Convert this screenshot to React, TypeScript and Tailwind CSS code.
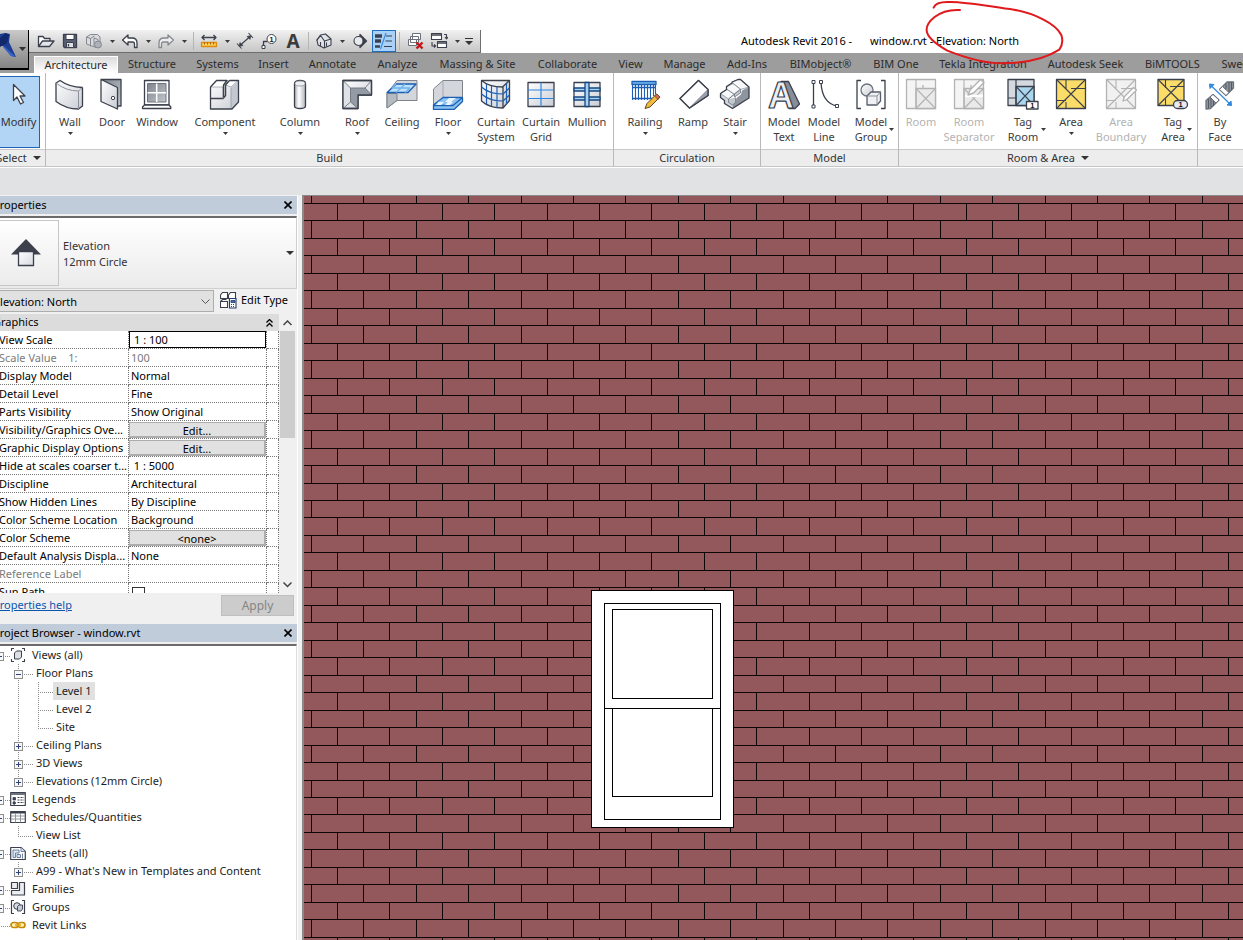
import type { ReactNode } from "react";
import clsx from "clsx";

const INK = "#3b404c";
const BLUE = "#1d5fb4";

/* ---------- shared drawing helpers ---------- */

function Defs() {
  return (
    <svg className="absolute h-0 w-0" aria-hidden="true">
      <defs>
        <linearGradient id="metal" x1="0" y1="0" x2="1" y2="1">
          <stop offset="0" stopColor="#ffffff" />
          <stop offset="1" stopColor="#c9cdd4" />
        </linearGradient>
        <linearGradient id="dark" x1="0" y1="0" x2="1" y2="1">
          <stop offset="0" stopColor="#7e848e" />
          <stop offset="1" stopColor="#c3c7cd" />
        </linearGradient>
        <linearGradient id="tube" x1="0" y1="0" x2="1" y2="0">
          <stop offset="0" stopColor="#a9adb5" />
          <stop offset="0.4" stopColor="#ffffff" />
          <stop offset="1" stopColor="#b0b4bc" />
        </linearGradient>
      </defs>
    </svg>
  );
}

function Icon({ size = 32, children, faded }: { size?: number; children: ReactNode; faded?: boolean }) {
  return (
    <svg
      width={size}
      height={size}
      viewBox={`0 0 ${size} ${size}`}
      fill="none"
      stroke={INK}
      strokeWidth="1.3"
      strokeLinejoin="round"
      aria-hidden="true"
      className={clsx("shrink-0", faded && "opacity-40 grayscale")}
    >
      {children}
    </svg>
  );
}

function Down({ small }: { small?: boolean }) {
  return small ? (
    <svg width="5" height="3" viewBox="0 0 5 3" aria-hidden="true">
      <path d="M0 0h5L2.500 3z" fill="#3a3a3a" />
    </svg>
  ) : (
    <svg width="8" height="4" viewBox="0 0 8 4" aria-hidden="true">
      <path d="M0 0h8L4 4z" fill="#333" />
    </svg>
  );
}

/* ---------- ribbon icons ---------- */

const CursorIcon = (
  <Icon>
    <path d="M10.500 6.500v16l3.500-3.500 3.500 7 3-1.500-3.500-6.500h5z" fill="#fff" />
  </Icon>
);
const WallIcon = (
  <Icon>
    <path d="M2 5 6 2.500Q15 9 28.500 9.500V28l-4 3Q12 31 2 23.500z" fill="url(#metal)" />
    <path d="M2 5Q12 13 24.500 13V31M24.500 13l4-3.500" stroke="#8b909a" strokeWidth="1" />
  </Icon>
);
const DoorIcon = (
  <Icon>
    <path d="M5 1.500h20V28h-4" fill="url(#dark)" />
    <path d="M5 1.500 21.500 9.500V31L5 23.500z" fill="url(#metal)" />
    <circle cx="17" cy="20" r="1.700" fill="#fff" strokeWidth="1" />
  </Icon>
);
const WindowIcon = (
  <Icon>
    <path d="M3.500 2.500h24.500V27H3.500z" fill="#fff" />
    <path d="M6.500 5.500h18.500V24H6.500z" fill="url(#dark)" stroke="#6d737e" strokeWidth="1" />
    <path d="M15.700 5.500V24M6.500 14.800H25" stroke="#fff" strokeWidth="1.500" />
    <path d="M1.500 30.500V29l2-2H28l1.800 2v1.500z" fill="#fff" />
  </Icon>
);
const ComponentIcon = (
  <Icon>
    <path d="M1.500 9 7.500 2.500h22V24L23 31H1.500z" fill="url(#metal)" stroke="none" />
    <path d="M22 10 29.500 3V24L23 31h-1z" fill="#c3c7cf" stroke="none" />
    <path d="M1.500 9 7.500 2.500h10.500L14 9zM22 9l7-6.500h-8.500L16.500 7z" fill="#fff" stroke="#9aa0aa" strokeWidth="0.800" />
    <path d="M16.500 7v10.500L14 20.500H1.500" strokeWidth="1.500" />
    <path d="M14 9v11.500M22 9.500V31" stroke="#9aa0aa" strokeWidth="0.900" />
    <path d="M1.500 9 7.500 2.500h10.500L14.500 7v12.500M20.500 2.500h9V24L23 31H1.500V9M16.500 7l4-4.500" />
  </Icon>
);
const ColumnIcon = (
  <Icon>
    <path d="M10.500 5.500Q10.500 2.500 16 2.500T21.500 5.500V28Q21.500 30.500 16 30.500T10.500 28z" fill="url(#tube)" />
    <ellipse cx="16" cy="5.500" rx="5" ry="2.500" fill="#eef0f2" stroke="#8b909a" strokeWidth="0.800" />
  </Icon>
);
const RoofIcon = (
  <Icon>
    <path d="M2 2.500h28.500V17H17v13.500H2z" fill="url(#metal)" />
    <path d="M2 2.500 9.500 10V24L2 30.500z" fill="#dfe2e6" stroke="none" />
    <path d="M9.500 10H24l6.500 7H17v13.500L9.500 24z" fill="#959ba5" stroke="none" />
    <path d="M2 2.500 9.500 10H24l6.500-7.500M24 10l6.500 7M9.500 10V24L17 30.500M9.500 24 2 30.500" stroke="#6d737e" strokeWidth="0.900" />
    <path d="M2 2.500h28.500V17H17v13.500H2z" />
  </Icon>
);
const CeilingIcon = (
  <Icon>
    <path d="M1 15.500 11 2.500h20v20H11L1 30z" fill="#d3d6da" stroke="#7d828b" strokeWidth="1" />
    <path d="M11 15.500v7L1 30V15.500z" fill="#b5bac1" stroke="#7d828b" strokeWidth="1" />
    <path d="M1 14.500 10.500 6H30l-8 8.500z" fill="#bfe0fb" stroke={BLUE} />
    <path d="m10 6-4 4h9l-5 4.500M19 6l-4 4h9M19 14.500l5-4.500" stroke="#6fb4ea" />
  </Icon>
);
const FloorIcon = (
  <Icon>
    <path d="M1.500 11 11 2.500h19.500V20H13L1.500 27z" fill="#d3d6da" stroke="#7d828b" strokeWidth="1" />
    <path d="M11 2.500V20" stroke="#a5aab2" strokeWidth="1" />
    <path d="M1.500 27 11 19.500h19.500v4L22 31.500H1.500z" fill="#8cc3f2" stroke={BLUE} />
    <path d="M1.500 27.500H21l9.500-8" stroke={BLUE} />
    <path d="m9 21-3 3h6l-3 3H4zM17 20l-4 4h6l5-4zM16 24l-3 3h5l3-3z" fill="#e8f5ff" stroke="none" />
  </Icon>
);
const CurtainSystemIcon = (
  <Icon>
    <path d="M1.500 2.500h28v20L23 30Q9 30 1.500 23z" fill="url(#metal)" />
    <path d="M1.500 2.500Q9 9 22.500 9l7-6.500M23 9v21" />
    <path d="M1.500 9Q9 16 23 16l6.500-6M1.500 16Q9 23 23 23l6.500-6M6.500 6v20.500M11.500 8v20.500M17 8.500V30M26.500 5.500V26" stroke={BLUE} strokeWidth="1.200" />
  </Icon>
);
const CurtainGridIcon = (
  <Icon>
    <path d="M3 4.500h26v24H3z" fill="url(#metal)" />
    <path d="M16 4.500v24M3 12h26M3 20.500h26" stroke="#2f86e0" strokeWidth="1.200" />
  </Icon>
);
const MullionIcon = (
  <Icon>
    <path d="M3 4.500h26v24H3z" fill="url(#metal)" />
    <path d="M3 10h26v3H3zM3 19h26v3H3z" fill="#a6d4f9" stroke="#17467f" />
    <path d="M14 4.500h4v24h-4z" fill="#a6d4f9" stroke="#17467f" />
  </Icon>
);
const RailingIcon = (
  <Icon>
    <path d="M3 3.500h24v3H3zM3 9.500h24M3 20.500h22" fill="#73b8f0" stroke={BLUE} />
    <path d="M3.500 6.500V22M6.500 6.500V22M9.500 6.500V22M12.500 6.500V22M15.500 6.500V22M18.500 6.500V22M21.500 6.500V20M24.500 6.500V18M26.500 6.500V16" stroke={BLUE} strokeWidth="1.100" />
    <path d="M16 30.500 18 25.500 27.500 16l3.500 3-10 10z" fill="#f5b93b" stroke="#5b4a2b" strokeWidth="1" />
    <path d="m25.500 18 3.500 3.500 2-2.500-3.500-3z" fill="#d86a52" stroke="#5b4a2b" strokeWidth="0.800" />
  </Icon>
);
const RampIcon = (
  <Icon>
    <path d="M3 20.500 21.500 2.500l9.500 9v6L12.500 30z" fill="#b0b5bf" />
    <path d="M3 20.500 21.500 2.500l9.500 9L12.500 30z" fill="#fff" stroke="none" />
    <path d="M31 11.500v6L12.500 30z" fill="#9ba1ac" stroke="none" />
    <path d="M12.500 30 31 11.500" stroke="#8b909a" strokeWidth="1" />
    <path d="M3 20.500 21.500 2.500l9.500 9v6L12.500 30z" />
  </Icon>
);
const StairIcon = (
  <Icon>
    <path d="M13.500 30.500 30 20V9l-7 3.500-1 4-4.500 3.500-1 4-3 1.500z" fill="#8f959f" stroke="none" />
    <path d="M1.500 15.500v4l4 3v3l8 5V26l-4-3v-2z" fill="#d3d7dd" stroke="none" />
    <path d="m1.500 15.500 6.500-4 7 4.500-5.500 5zM7.500 11V9l6.500-3.500 7.500 5.500-6.500 5zM13 4.500 19 1.500h2.500L30 9l-8.500 2.500z" fill="#f7f8fa" stroke="#8b909a" strokeWidth="0.800" />
    <path d="M9.500 21 15.500 16.500M21.500 11.500 15.500 16v3L21.500 15zM9.500 21v3.500l4 2.500 3-2.500v-5" fill="#c3c7ce" stroke="#6d737e" strokeWidth="0.800" />
    <path d="M13.500 30.500 5.500 25.500V22.500l-4-3v-4l6-4V8.500l5.500-3.500V4l6-2.500h2.500L30 9v11z" />
  </Icon>
);
const ModelTextIcon = (
  <Icon>
    <path d="M13 3.500h7.500L31.500 26l-4.500 4.500h-6z" fill="#888e98" />
    <text x="0" y="30" fill="#eceef1" fontFamily="Liberation Sans" fontWeight="bold" fontSize="36" strokeWidth="1.200">
      A
    </text>
  </Icon>
);
const ModelLineIcon = (
  <Icon>
    <path d="M5.500 4.500v24M13 4.500Q14 25 29 28" />
    <path d="M4 2.500h3v3H4zM4 27h3v3H4zM11.500 2.500h3v3h-3zM27.500 26.500h3v3h-3z" fill="#fff" strokeWidth="1" />
  </Icon>
);
const ModelGroupIcon = (
  <Icon>
    <path d="M6 2.500H2v28h4M26 2.500h4v28h-4" />
    <circle cx="12" cy="12" r="6" fill="url(#metal)" stroke="#6d737e" />
    <path d="m12 18 4-4h9.500v9L22 27H12z" fill="#eef0f3" stroke="#565c68" />
    <path d="M12 18h10v9M22 18l3.500-4" stroke="#8b909a" strokeWidth="1" />
  </Icon>
);

function PlanBase({ fill, room }: { fill: string; room: string }) {
  return (
    <>
      <path d="M1.500 1.500H30.500V30.500H1.500z" fill={fill} />
      <path d="M11 10.500h19.500v20H11z" fill={room} />
      <path d="M11 1.500v29M11 10.500h19.500M11 10.500l19.500 20M30.500 10.500 11 30.500" strokeWidth="1.100" />
      <path d="M18 10.500V7" />
    </>
  );
}
const RoomIcon = (
  <Icon faded>
    <PlanBase fill="#e4e6e9" room="#c9ccd2" />
  </Icon>
);
const RoomSeparatorIcon = (
  <Icon faded>
    <PlanBase fill="#e4e6e9" room="#c9ccd2" />
    <path d="M12 18h18" stroke="#fff" strokeWidth="2.500" />
    <path d="m15 17 2-5L27.500 1.500l3.500 3L20.500 15z" fill="#fff" strokeWidth="1.400" />
  </Icon>
);
const TagRoomIcon = (
  <Icon>
    <path d="M1 1.500h26v26H1z" fill="#d4d9e0" />
    <path d="M9 8.500h18v19H9z" fill="#a9d5ee" />
    <path d="M9 1.500v26M9 8.500h18M9 8.500l18 19M27 8.500l-18 19M1 20h8" strokeWidth="1.200" />
    <path d="M19.500 23.500H31V31H19.500z" fill="#fff" />
    <text x="23.300" y="30" fontSize="7.500" fontWeight="bold" fill="#111" stroke="none" fontFamily="Liberation Sans">1</text>
  </Icon>
);
const AreaLines = <path d="M1.500 1.500l29 29M30.500 1.500l-29 29M11 1.500V11M11 24v6.500M16 10.500h14.500M1.500 22.500H11" strokeWidth="1.100" />;
const AreaIcon = (
  <Icon>
    <path d="M1.500 1.500h29v29h-29z" fill="#fbdc68" />
    {AreaLines}
  </Icon>
);
const AreaBoundaryIcon = (
  <Icon faded>
    <path d="M1.500 1.500h29v29h-29z" fill="#dcdee2" />
    {AreaLines}
    <path d="m18 23 1.500-4.500 9-9 3 2.500-9.500 9.500z" fill="#fff" />
  </Icon>
);
const TagAreaIcon = (
  <Icon>
    <path d="M1 1.500h26v26H1z" fill="#fbdc68" />
    <path d="m1 1.500 26 26M27 1.500l-26 26M8.500 1.500V10M13 8.500h14M8.500 21v6.500" strokeWidth="1.100" />
    <rect x="16.500" y="22.500" width="14" height="8" rx="4" fill="#e8eaf3" />
    <text x="21.400" y="29.300" fontSize="7.500" fontWeight="bold" fill="#111" stroke="none" fontFamily="Liberation Sans">1</text>
  </Icon>
);
const ByFaceIcon = (
  <Icon>
    <path d="M15.500 11.500 23 4h6.500v6l-7.500 7.500zM2 31v-8.500l7-6 6 5.500L6.500 30.500z" fill="#8f949d" stroke="#6b717c" />
    <path d="m15.500 11.500 3-3 6.500 6-3 3zM6 19l3-2.500 6 5.500-3 3z" fill="#fff" stroke="#6b717c" strokeWidth="1" />
    <path d="M22 6v5M25 4v10M27.500 4v8M4.500 21v9M7 20v9M9.500 23v5" stroke="#4d525c" strokeWidth="0.900" />
    <path d="M7 7.500 26 26" stroke="#3287e0" strokeWidth="1.200" />
    <path d="m5.500 6 4.500.500L6 10.500zM27.500 27.500l-4.500-.5 4-4z" fill="#3287e0" stroke="#3287e0" strokeWidth="1" />
  </Icon>
);

/* ---------- quick access toolbar ---------- */

const OpenIcon = (
  <Icon size={18}>
    <path d="M1.500 14.500V4.500h4.500l1.500 2h5.500v2.500" fill="#fff" />
    <path d="m1.500 14.500 4-5.500h11.500l-4.500 5.500z" fill="#e4e6ea" />
  </Icon>
);
const SaveIcon = (
  <Icon size={18}>
    <path d="M2.500 2.500h13v13h-12l-1-1z" fill="#596072" />
    <path d="M5 2.500h8v5H5z" fill="#fff" strokeWidth="1" />
    <path d="M5.500 10.500h7v5h-7z" fill="#dfe2e7" strokeWidth="1" />
    <path d="M7.500 12v2.500" />
  </Icon>
);
const SyncIcon = (
  <Icon size={18}>
    <g stroke="#85888f" strokeWidth="1">
      <path d="m1.500 5 4-2.500h7L15 5v7l-4 3.500L1.500 12z" fill="#d9dbdf" />
      <path d="m1.500 5 4 1.500v8M5.500 6.500l4-2.500M9 6l4 1.500V12M9 6v8" />
      <circle cx="13" cy="12.500" r="3.500" fill="#aeb1b7" />
    </g>
  </Icon>
);
const UndoIcon = (
  <Icon size={18}>
    <path d="M7 3 1.500 8 7 13v-3h4.500q2 0 2 2v3.500h2.500V11q0-5-5-5H7z" fill="#fff" />
  </Icon>
);
const RedoIcon = (
  <Icon size={18}>
    <path d="m11 3 5.500 5-5.500 5v-3H6.500q-2 0-2 2v3.500H2V11q0-5 5-5h4z" fill="#eee" stroke="#85888f" />
  </Icon>
);
const MeasureIcon = (
  <Icon size={18}>
    <path d="M2 5.500h14M4.500 3 2 5.500 4.500 8M13.500 3 16 5.500 13.500 8" />
    <path d="M1.500 10.500h15v4h-15z" fill="#ffd25a" stroke="#dc8b10" />
    <path d="M4.500 10.500v2M7.500 10.500v2M10.500 10.500v2M13.500 10.500v2" stroke="#a36205" strokeWidth="1" />
  </Icon>
);
const DimensionIcon = (
  <Icon size={18}>
    <path d="M4 13.500 14 4.500M1 11.500l4.500 5M12.500 1l4.500 5" strokeWidth="1.100" />
    <path d="m3 14.500 1-4 3 3zM15 3.500l-4 1 3 3z" fill={INK} strokeWidth="0.600" />
  </Icon>
);
const TagIcon = (
  <Icon size={18}>
    <path d="M3.500 14V9.500h4" />
    <circle cx="11.500" cy="7" r="4.500" fill="#fff" strokeWidth="1" />
    <path d="M2 13.500h3v3H2z" fill="#fff" strokeWidth="1" />
    <text x="9.300" y="9.800" fontSize="8" fontWeight="bold" fill="#222" stroke="none" fontFamily="Liberation Sans">1</text>
  </Icon>
);
const HouseIcon = (
  <Icon size={18}>
    <path d="m2 8 3.500-5 5-1L16 7v6l-7 3-6-3z" fill="#dfe2e6" strokeWidth="1.100" />
    <path d="m1.500 8.500 4-5L9.500 9v7M9.500 9 16 7M11.500 10.500v4M5.500 10v4" strokeWidth="1.100" />
  </Icon>
);
const SectionIcon = (
  <Icon size={18}>
    <path d="M9 2.500 15.500 9 9 15.500z" fill={INK} />
    <circle cx="7.500" cy="9" r="4.500" fill="#e8eaed" strokeWidth="1.100" />
  </Icon>
);
const ThinLinesIcon = (
  <Icon size={18}>
    <path d="M0 4h7M0 9h6" strokeWidth="3.500" />
    <path d="M0 14.500h5" strokeWidth="2.500" />
    <path d="M11 4h6M10.500 9H17M9 14.500h8" strokeWidth="1.200" />
    <path d="M11 1 5.500 17" stroke="#3a8de6" strokeWidth="1.200" />
  </Icon>
);
const CloseHiddenIcon = (
  <Icon size={18}>
    <g strokeWidth="1" stroke="#6b707a">
      <path d="M6.500 1.500h8v6h-8zM4.500 4.500h8v6h-8zM2.500 7.500h8v6h-8z" fill="#fff" />
    </g>
    <path d="m10.500 10.500 6 6M16.500 10.500l-6 6" stroke="#c4161c" strokeWidth="2.400" />
  </Icon>
);
const SwitchIcon = (
  <Icon size={18}>
    <path d="M1.500 1.500h10v6h-10zM7.500 9.500h9v6h-9z" fill="#fff" strokeWidth="1.100" />
    <path d="M1.500 3h10M7.500 11h9" strokeWidth="1.600" />
    <path d="M14 2.500h2.500V6M15 5l1.500 2L18 5M2 10v4h3.500M4 12.500 5.500 14 4 15.500" strokeWidth="1.100" />
  </Icon>
);

function QuickButton({ label, active, children }: { label: string; active?: boolean; children: ReactNode }) {
  return (
    <button
      type="button"
      aria-label={label}
      className={clsx(
        "flex h-[22px] w-6 shrink-0 items-center justify-center",
        active && "border border-[#1f6fc0] bg-[#a9d1f7]",
      )}
    >
      {children}
    </button>
  );
}

function QuickMenu({ label }: { label: string }) {
  return (
    <button type="button" aria-label={label} className="flex h-[22px] w-3 shrink-0 items-center justify-center">
      <Down small />
    </button>
  );
}

const QuickDivider = () => <span className="mx-[3px] h-[18px] w-px shrink-0 bg-[#b5b5b5]" />;

function QuickAccess() {
  return (
    <div className="flex h-[23px] shrink-0 items-center border-r border-b border-[#6e6e6e] bg-linear-to-b from-[#f1f1f1] to-[#c6c6c6] px-[5px]">
      <QuickButton label="Open">{OpenIcon}</QuickButton>
      <QuickButton label="Save">{SaveIcon}</QuickButton>
      <QuickButton label="Synchronize">{SyncIcon}</QuickButton>
      <QuickMenu label="Synchronize options" />
      <QuickButton label="Undo">{UndoIcon}</QuickButton>
      <QuickMenu label="Undo history" />
      <QuickButton label="Redo">{RedoIcon}</QuickButton>
      <QuickMenu label="Redo history" />
      <QuickDivider />
      <QuickButton label="Measure">{MeasureIcon}</QuickButton>
      <QuickMenu label="Measure options" />
      <QuickButton label="Aligned dimension">{DimensionIcon}</QuickButton>
      <QuickButton label="Tag by category">{TagIcon}</QuickButton>
      <QuickButton label="Text">
        <span className="text-[19px] leading-none font-bold text-[#3b3b3b]">A</span>
      </QuickButton>
      <QuickDivider />
      <QuickButton label="Default 3D view">{HouseIcon}</QuickButton>
      <QuickMenu label="3D view options" />
      <QuickButton label="Section">{SectionIcon}</QuickButton>
      <QuickButton label="Thin lines" active>
        {ThinLinesIcon}
      </QuickButton>
      <QuickDivider />
      <QuickButton label="Close hidden windows">{CloseHiddenIcon}</QuickButton>
      <QuickButton label="Switch windows">{SwitchIcon}</QuickButton>
      <QuickMenu label="Window list" />
      <button type="button" aria-label="Customize toolbar" className="flex h-[22px] w-3 flex-col items-center justify-center gap-[2px]">
        <span className="h-px w-2 bg-[#333]" />
        <Down />
      </button>
    </div>
  );
}

/* ---------- ribbon ---------- */

const TABS = [
  { label: "Architecture", width: "w-[84px]" },
  { label: "Structure", width: "w-[68px]" },
  { label: "Systems", width: "w-[63px]" },
  { label: "Insert", width: "w-[49px]" },
  { label: "Annotate", width: "w-[69px]" },
  { label: "Analyze", width: "w-[61px]" },
  { label: "Massing & Site", width: "w-[99px]" },
  { label: "Collaborate", width: "w-[81px]" },
  { label: "View", width: "w-[45px]" },
  { label: "Manage", width: "w-[63px]" },
  { label: "Add-Ins", width: "w-[62px]" },
  { label: "BIMobject®", width: "w-[85px]" },
  { label: "BIM One", width: "w-[66px]" },
  { label: "Tekla Integration", width: "w-[108px]" },
  { label: "Autodesk Seek", width: "w-[97px]" },
  { label: "BiMTOOLS", width: "w-[77px]" },
  { label: "Sweet", width: "w-[52px]" },
];

type Tool = { lines: string[]; icon: ReactNode; width: string; menu?: boolean; off?: boolean };
type Panel = { title: string; pad: string; tools: Tool[]; menu?: boolean };

const PANELS: Panel[] = [
  {
    title: "Build",
    pad: "pr-1 pl-[3px]",
    tools: [
      { lines: ["Wall"], icon: WallIcon, width: "w-[42px]", menu: true },
      { lines: ["Door"], icon: DoorIcon, width: "w-[42px]" },
      { lines: ["Window"], icon: WindowIcon, width: "w-[48px]" },
      { lines: ["Component"], icon: ComponentIcon, width: "w-[88px]", menu: true },
      { lines: ["Column"], icon: ColumnIcon, width: "w-[62px]", menu: true },
      { lines: ["Roof"], icon: RoofIcon, width: "w-[52px]", menu: true },
      { lines: ["Ceiling"], icon: CeilingIcon, width: "w-[38px]" },
      { lines: ["Floor"], icon: FloorIcon, width: "w-[54px]", menu: true },
      { lines: ["Curtain", "System"], icon: CurtainSystemIcon, width: "w-[42px]" },
      { lines: ["Curtain", "Grid"], icon: CurtainGridIcon, width: "w-[48px]" },
      { lines: ["Mullion"], icon: MullionIcon, width: "w-[44px]" },
    ],
  },
  {
    title: "Circulation",
    pad: "px-[7px]",
    tools: [
      { lines: ["Railing"], icon: RailingIcon, width: "w-[48px]", menu: true },
      { lines: ["Ramp"], icon: RampIcon, width: "w-[48px]" },
      { lines: ["Stair"], icon: StairIcon, width: "w-[36px]", menu: true },
    ],
  },
  {
    title: "Model",
    pad: "pl-[3px]",
    tools: [
      { lines: ["Model", "Text"], icon: ModelTextIcon, width: "w-[40px]" },
      { lines: ["Model", "Line"], icon: ModelLineIcon, width: "w-[40px]" },
      { lines: ["Model", "Group"], icon: ModelGroupIcon, width: "w-[54px]", menu: true },
    ],
  },
  {
    title: "Room & Area",
    pad: "px-px",
    menu: true,
    tools: [
      { lines: ["Room"], icon: RoomIcon, width: "w-[42px]", off: true },
      { lines: ["Room", "Separator"], icon: RoomSeparatorIcon, width: "w-[54px]", off: true },
      { lines: ["Tag", "Room"], icon: TagRoomIcon, width: "w-[54px]", menu: true },
      { lines: ["Area"], icon: AreaIcon, width: "w-[42px]", menu: true },
      { lines: ["Area", "Boundary"], icon: AreaBoundaryIcon, width: "w-[58px]", off: true },
      { lines: ["Tag", "Area"], icon: TagAreaIcon, width: "w-[46px]", menu: true },
    ],
  },
];

function ToolButton({ tool }: { tool: Tool }) {
  const twoLines = tool.lines.length > 1;
  return (
    <button
      type="button"
      disabled={tool.off}
      className={clsx(
        "relative flex shrink-0 flex-col items-center pt-[5px] whitespace-nowrap",
        tool.width,
        tool.off ? "text-[#b3b3b3]" : "text-[#3c3c3c]",
      )}
    >
      {tool.icon}
      <span className="mt-1 flex flex-col items-center leading-[15px]">
        {tool.lines.map((line) => (
          <span key={line}>{line}</span>
        ))}
      </span>
      {tool.menu && (
        <span className={twoLines ? "absolute right-1 bottom-[18px]" : "mt-[3px]"}>
          <Down small />
        </span>
      )}
    </button>
  );
}

function PanelTitle({ children }: { children?: ReactNode }) {
  return (
    <div className="flex h-[17px] items-center justify-center gap-[6px] border-t border-[#c9c9c9] bg-[#ededee] whitespace-nowrap">
      {children}
    </div>
  );
}

function Ribbon() {
  return (
    <div className="flex h-[94px] shrink-0 border-b border-[#c4c6c8] bg-white text-[#333]">
      <section className="flex w-[54px] shrink-0 flex-col border-r border-[#b9b9b9]">
        <div className="flex h-[76px] pt-[3px] pb-px pl-[5px]">
          <button
            type="button"
            className="flex w-[43px] flex-col items-center border border-[#1f63b5] bg-[#b3d5f5] pt-px"
          >
            {CursorIcon}
            <span className="mt-1 leading-[15px]">Modify</span>
          </button>
        </div>
        <PanelTitle>
          Select <Down />
        </PanelTitle>
      </section>
      {PANELS.map((panel) => (
        <section key={panel.title} className="flex shrink-0 flex-col border-r border-[#b9b9b9]">
          <div className={clsx("flex h-[76px]", panel.pad)}>
            {panel.tools.map((tool) => (
              <ToolButton key={tool.lines.join(" ")} tool={tool} />
            ))}
          </div>
          <PanelTitle>
            {panel.title}
            {panel.menu && <Down />}
          </PanelTitle>
        </section>
      ))}
      <section className="flex flex-1 flex-col">
        <div className="flex h-[76px]">
          <ToolButton tool={{ lines: ["By", "Face"], icon: ByFaceIcon, width: "w-[44px]" }} />
        </div>
        <PanelTitle />
      </section>
    </div>
  );
}

function Header() {
  return (
    <header className="flex shrink-0 pt-[30px]">
      <div className="flex w-[37px] shrink-0 flex-col bg-[#9d9d9d]">
        <button
          type="button"
          aria-label="Application menu"
          className="flex h-10 items-start justify-end border-r border-b-2 border-black bg-linear-to-b from-[#c9c9c9] to-[#848484] pr-[2px]"
        >
          <svg width="26" height="38" viewBox="0 0 26 38" aria-hidden="true">
            <path d="M-4 5 5 3l5 1-1 8 7 15-5-1-8-10-7-2z" fill="#1c3f94" />
            <path d="m0 8 6-5 3 2-2 8-7 4z" fill="#12296b" />
            <path d="m4 16 12 11-5-1-8-9z" fill="#3764c4" />
            <path d="M19 17h7l-3.500 4z" fill="#333" />
          </svg>
        </button>
      </div>
      <div className="flex min-w-0 flex-1 flex-col">
        <div className="flex">
          <QuickAccess />
          <h1 className="ml-[260px] flex items-center gap-[18px] whitespace-nowrap text-black">
            <span>Autodesk Revit 2016 -</span>
            <span className="relative">
              window.rvt - Elevation: North
              <svg
                width="140"
                height="66"
                viewBox="0 0 420 198"
                className="pointer-events-none absolute -top-[33px] left-[54px] z-10"
                fill="none"
                stroke="#e0191c"
                strokeWidth="6"
                strokeLinecap="round"
                aria-hidden="true"
              >
                <path d="M29 23C34 10 50 5 75 6C120 4 200 20 270 29C330 40 395 70 412 105Q420 130 406 149C370 172 310 190 235 190C180 190 120 172 70 152C40 135 10 115 8 92C6 70 40 26 108 30" />
              </svg>
            </span>
          </h1>
        </div>
        <nav className="flex h-5 overflow-hidden bg-[#9d9d9d] pl-[5px] whitespace-nowrap text-[#2b2b2b]">
          {TABS.map((tab, i) => (
            <button
              key={tab.label}
              type="button"
              className={clsx(
                "shrink-0",
                tab.width,
                i === 0
                  ? "mt-[3px] border border-b-0 border-white bg-linear-to-b from-[#dcdcdc] to-white leading-[14px]"
                  : "leading-[22px]",
              )}
            >
              {tab.label}
            </button>
          ))}
        </nav>
      </div>
    </header>
  );
}

/* ---------- properties palette ---------- */

function PaletteTitle({ children }: { children: ReactNode }) {
  return (
    <div className="flex h-[18px] shrink-0 items-center justify-between bg-[#c0ccd9] pr-1 pl-px text-black">
      <h2>{children}</h2>
      <button type="button" aria-label="Close palette" className="flex size-[10px] items-center justify-center">
        <svg width="8" height="8" viewBox="0 0 8 8" stroke="#000" strokeWidth="1.600" aria-hidden="true">
          <path d="m.5.5 7 7M7.500.5l-7 7" />
        </svg>
      </button>
    </div>
  );
}

type Row = { name: string; value?: string; kind?: "edit" | "button" | "check"; dim?: boolean };

const ROWS: Row[] = [
  { name: "View Scale", value: "1 : 100", kind: "edit" },
  { name: "Scale Value    1:", value: "100", dim: true },
  { name: "Display Model", value: "Normal" },
  { name: "Detail Level", value: "Fine" },
  { name: "Parts Visibility", value: "Show Original" },
  { name: "Visibility/Graphics Ove...", value: "Edit...", kind: "button" },
  { name: "Graphic Display Options", value: "Edit...", kind: "button" },
  { name: "Hide at scales coarser t...", value: " 1 : 5000" },
  { name: "Discipline", value: "Architectural" },
  { name: "Show Hidden Lines", value: "By Discipline" },
  { name: "Color Scheme Location", value: "Background" },
  { name: "Color Scheme", value: "<none>", kind: "button" },
  { name: "Default Analysis Displa...", value: "None" },
  { name: "Reference Label", dim: true },
  { name: "Sun Path", kind: "check" },
];

function RowValue({ row }: { row: Row }) {
  if (row.kind === "edit")
    return (
      <input
        aria-label={row.name}
        defaultValue={row.value}
        className="block h-[17px] w-full border border-black bg-white px-1 outline-none"
      />
    );
  if (row.kind === "button")
    return (
      <button
        type="button"
        aria-label={`${row.name} ${row.value}`}
        className="mt-px block h-4 w-full border border-r-2 border-b-2 border-[#adadad] bg-[#e1e1e1] leading-[15px]"
      >
        {row.value}
      </button>
    );
  if (row.kind === "check")
    return (
      <input
        type="checkbox"
        aria-label={row.name}
        className="mt-1 ml-[3px] block size-[13px] appearance-none border border-[#333] bg-white"
      />
    );
  return <span className="block pt-px pl-[2px] leading-[15px] whitespace-pre">{row.value}</span>;
}

function Properties() {
  return (
    <section className="flex shrink-0 flex-col bg-[#f0f0f0]">
      <PaletteTitle>Properties</PaletteTitle>
      <button
        type="button"
        className="mt-[2px] flex h-[73px] items-center border-t-2 border-r border-b border-t-[#6b6b6b] border-r-[#cfcfcf] border-b-[#cfcfcf] bg-linear-to-b from-white to-[#ebebec] pr-[2px] text-left text-[#333]"
      >
        <span className="flex h-[66px] w-[67px] items-center justify-end border border-[#c6c6c6] pr-4">
          <svg width="32" height="32" viewBox="0 0 32 32" aria-hidden="true">
            <defs>
              <linearGradient id="house" x1="0" y1="0" x2="1" y2="1">
                <stop offset="0" stopColor="#fff" />
                <stop offset="1" stopColor="#d5d9e2" />
              </linearGradient>
            </defs>
            <path d="M16 2 31 17.500H1z" fill="#3b404c" />
            <path d="M8.500 14.500h15v14h-15z" fill="url(#house)" stroke="#3b404c" strokeWidth="1.300" />
          </svg>
        </span>
        <span className="flex-1 pt-px pl-1 leading-4">
          Elevation
          <br />
          12mm Circle
        </span>
        <Down />
      </button>
      <div className="mt-px flex h-[22px] items-center">
        <div className="relative w-[222px]">
          <select
            aria-label="View instance"
            className="h-[22px] w-full appearance-none border border-[#adadad] bg-[#e1e1e1] px-px pt-[2px] text-black"
          >
            <option>Elevation: North</option>
          </select>
          <svg
            width="9"
            height="6"
            viewBox="0 0 9 6"
            fill="none"
            stroke="#555"
            className="pointer-events-none absolute top-[9px] right-1"
            aria-hidden="true"
          >
            <path d="m.5.5 4 4 4-4" />
          </svg>
        </div>
        <button type="button" className="ml-[6px] flex h-5 items-center gap-1 pb-[2px] whitespace-nowrap text-black">
          <svg width="17" height="17" viewBox="0 0 17 17" fill="#fff" stroke="#3b404c" strokeWidth="1.100" aria-hidden="true">
            <path d="m.5 3 2-2.500h5v6h-7zM8.500 3l2-2.500h5v6h-7zM.5 9.500h7v6h-7zM.5 9.500l2-2h4" />
            <path d="M9.500 6.500h6.500v9.500H9.500z" stroke="#1f3d6d" />
            <path d="M11 8.500h4v2h-4z" fill="#3e6fae" stroke="#1f3d6d" strokeWidth="0.800" />
            <path d="M11 12.500h4M11 14.500h4" strokeDasharray="1 1" />
          </svg>
          Edit Type
        </button>
      </div>
      <div className="mt-[2px] flex h-[279px] text-black">
        <div className="w-[287px] overflow-hidden bg-white">
          <div className="flex h-[17px] items-center justify-between bg-[#dcdcdc] pr-[6px] pl-px">
            <h3>Graphics</h3>
            <svg width="7" height="8" viewBox="0 0 7 8" fill="none" stroke="#000" strokeWidth="1.300" aria-hidden="true">
              <path d="m.5 3.500 3-3 3 3M.5 7.500l3-3 3 3" />
            </svg>
          </div>
          <table className="w-full table-fixed border-separate border-spacing-0">
            <colgroup>
              <col className="w-[137px]" />
              <col className="w-[138px]" />
              <col className="w-[12px]" />
            </colgroup>
            <tbody>
              {ROWS.map((row) => (
                <tr key={row.name} className={clsx("h-[18px]", row.dim && "text-[#7b7b7b]")}>
                  <th
                    scope="row"
                    className="h-[18px] overflow-hidden border-r border-b border-dotted border-[#777] px-0 py-px pl-[7px] text-left leading-[15px] font-normal whitespace-pre"
                  >
                    {row.name}
                  </th>
                  <td className="h-[18px] border-r border-b border-dotted border-[#777] p-0 align-top">
                    <RowValue row={row} />
                  </td>
                  <td className="border-r border-b border-dotted border-[#777] p-0" />
                </tr>
              ))}
            </tbody>
          </table>
        </div>
        <div className="flex w-4 flex-col items-center bg-[#f0f0f0]">
          <button type="button" aria-label="Scroll up" className="flex h-[17px] w-full items-center justify-center">
            <svg width="9" height="6" viewBox="0 0 9 6" fill="none" stroke="#444" strokeWidth="1.500" aria-hidden="true">
              <path d="m.5 5 4-4 4 4" />
            </svg>
          </button>
          <div className="h-[107px] w-[15px] bg-[#cdcdcd]" />
          <button type="button" aria-label="Scroll down" className="mt-auto flex h-[17px] w-full items-center justify-center">
            <svg width="9" height="6" viewBox="0 0 9 6" fill="none" stroke="#444" strokeWidth="1.500" aria-hidden="true">
              <path d="m.5.5 4 4 4-4" />
            </svg>
          </button>
        </div>
      </div>
      <div className="flex h-[25px] items-center justify-between pr-[3px] pl-px">
        <a href="#help" className="text-[#0a56ad] underline">
          Properties help
        </a>
        <button
          type="button"
          disabled
          className="h-[21px] w-[73px] border border-[#bfbfbf] bg-[#cccccc] text-xs leading-[19px] text-[#858585]"
        >
          Apply
        </button>
      </div>
    </section>
  );
}

/* ---------- project browser ---------- */

const ViewsIcon = (
  <Icon size={16}>
    <path d="M4 1.500H1.500V4M12 1.500h2.500V4M4 14.500H1.500V12M12 14.500h2.500V12" strokeWidth="1.100" />
    <path d="m4.500 6 2-2h5v6l-2 2h-5z" fill="#dde0e5" strokeWidth="1" />
  </Icon>
);
const LegendsIcon = (
  <Icon size={16}>
    <path d="M.7 1.500h14.600v13H.7z" fill="#fff" strokeWidth="1.200" />
    <path d="M1 3h14" stroke="#6d737e" strokeWidth="2" />
    <path d="M3 6.500h2.500V9H3z" fill={INK} strokeWidth="0.800" />
    <circle cx="4.200" cy="12" r="1.400" fill={INK} strokeWidth="0.600" />
    <path d="M7.500 6.500H14M7.500 9H14M7.500 11.500H14" strokeDasharray="2 1" strokeWidth="1" />
  </Icon>
);
const SchedulesIcon = (
  <Icon size={16}>
    <path d="M.7 2.500h14.600v11H.7z" fill="#fff" strokeWidth="1.200" />
    <path d="M1 3.500h14" strokeWidth="2" />
    <path d="M1 7h14M1 10h14M5.500 4v9.500M10.500 4v9.500" stroke="#8a8f99" strokeWidth="0.900" />
  </Icon>
);
const SheetsIcon = (
  <Icon size={16}>
    <path d="M.7 2.500H11l4.300 4v8H.7z" fill="#fff" strokeWidth="1.200" />
    <path d="M3 5h6v3H5.500v4.500H3zM7 9.500h3.500v3H7zM11 2.500v4h4M12.500 8.500v5" fill="#dbe7f6" stroke="#5f7596" strokeWidth="0.900" />
  </Icon>
);
const FamiliesIcon = (
  <Icon size={16}>
    <path d="M1.500 1.500h6v6h-6zM9.500 1.500h5v12.500h-13V9.500h8z" fill="#eceef1" strokeWidth="1.200" />
  </Icon>
);
const GroupsIcon = (
  <Icon size={16}>
    <path d="M4 1.500H1.500v13H4M12 1.500h2.500v13H12" strokeWidth="1.200" />
    <circle cx="7" cy="7" r="3.300" fill="#d5dae2" strokeWidth="1" />
    <path d="m7.500 7.500 1.500-1.500h3.500v4L11 12H7.500z" fill="#c2cad6" strokeWidth="0.900" />
  </Icon>
);
const LinksIcon = (
  <Icon size={16}>
    <g stroke="#c58a08" strokeWidth="1.700">
      <rect x="1" y="5.500" width="7" height="5" rx="2.500" fill="#fff3b0" />
      <rect x="8" y="5.500" width="7" height="5" rx="2.500" fill="#fff3b0" />
      <path d="M5 8h6" stroke="#e3ab1c" />
    </g>
  </Icon>
);

type Node = {
  label: string;
  depth: 0 | 1 | 2;
  icon?: ReactNode;
  toggle?: "+" | "-";
  last?: boolean;
  picked?: boolean;
  trunk?: boolean;
};

const TREE: Node[] = [
  { label: "Views (all)", depth: 0, icon: ViewsIcon, toggle: "-" },
  { label: "Floor Plans", depth: 1, toggle: "-" },
  { label: "Level 1", depth: 2, trunk: true, picked: true },
  { label: "Level 2", depth: 2, trunk: true },
  { label: "Site", depth: 2, trunk: true, last: true },
  { label: "Ceiling Plans", depth: 1, toggle: "+" },
  { label: "3D Views", depth: 1, toggle: "+" },
  { label: "Elevations (12mm Circle)", depth: 1, toggle: "+", last: true },
  { label: "Legends", depth: 0, icon: LegendsIcon, toggle: "-" },
  { label: "Schedules/Quantities", depth: 0, icon: SchedulesIcon, toggle: "-" },
  { label: "View List", depth: 1, last: true },
  { label: "Sheets (all)", depth: 0, icon: SheetsIcon, toggle: "-" },
  { label: "A99 - What's New in Templates and Content", depth: 1, toggle: "+", last: true },
  { label: "Families", depth: 0, icon: FamiliesIcon, toggle: "+" },
  { label: "Groups", depth: 0, icon: GroupsIcon, toggle: "+" },
  { label: "Revit Links", depth: 0, icon: LinksIcon },
];

const GUIDE = [
  { width: 18, axis: 7.5 },
  { width: 41, axis: 26.5 },
  { width: 61, axis: 46.5 },
];

function Guide({ node }: { node: Node }) {
  const { width, axis } = GUIDE[node.depth];
  return (
    <svg width={width} height="18" viewBox={`0 0 ${width} 18`} fill="none" className="shrink-0" aria-hidden="true">
      <g stroke="#8c8c8c" strokeDasharray="1 1">
        <path d={`M${Math.floor(axis)} 10.500H${width}`} />
        {node.depth > 0 && <path d={`M${axis} 0V${node.last ? 10 : 18}`} />}
        {node.trunk && <path d="M26.500 0V18" />}
      </g>
      {node.toggle && (
        <g>
          <rect x={axis - 4} y="6.500" width="8" height="8" fill="#f6f7f9" stroke="#8f8f8f" />
          <path
            d={`M${axis - 2.5} 10.500h5${node.toggle === "+" ? `M${axis} 8v5` : ""}`}
            stroke="#34427c"
          />
        </g>
      )}
    </svg>
  );
}

function ProjectBrowser() {
  return (
    <section className="mt-[6px] flex min-h-0 flex-1 flex-col bg-[#f0f0f0]">
      <PaletteTitle>Project Browser - window.rvt</PaletteTitle>
      <ul className="mt-[2px] min-h-0 flex-1 overflow-hidden border-t-2 border-r border-t-[#6b6b6b] border-r-[#dcdcdc] bg-white text-[#1d1d1d]">
        {TREE.map((node) => (
          <li key={node.label} className="flex h-[18px] items-center whitespace-nowrap">
            <Guide node={node} />
            {node.icon}
            <span className={clsx("px-[3px] leading-[18px]", node.icon && "ml-[3px]", node.picked && "bg-[#e1e1e1]")}>
              {node.label}
            </span>
          </li>
        ))}
      </ul>
    </section>
  );
}

/* ---------- drawing area ---------- */

const COURSE = 17.47;
const BRICK = 52.4;

function brickPath(columns: number, rows: number) {
  const parts: string[] = [];
  for (let r = -1; r < rows; r++) {
    const top = Math.round(7 + r * COURSE);
    const bottom = Math.round(7 + (r + 1) * COURSE);
    parts.push(`M0 ${top + 0.5}H${columns * BRICK}`);
    const shift = r % 2 === 0 ? 33 : 7;
    for (let c = 0; c < columns; c++) {
      parts.push(`M${Math.round(shift + c * BRICK) + 0.5} ${top}V${bottom}`);
    }
  }
  return parts.join("");
}

const BRICKS = brickPath(60, 100);

function Canvas() {
  return (
    <main className="min-w-0 flex-1 overflow-hidden border-t border-l-2 border-[#8a8a8a] bg-[#93585c]">
      <svg width="100%" height="100%" fill="none" stroke="#0d0506" shapeRendering="crispEdges" role="img" aria-label="North elevation">
        <path d={BRICKS} />
        <g fill="#fff" stroke="#000">
          <path d="M287.500 394.500h142v237h-142z" />
          <path d="M300.500 407.500h116v216h-116z" />
          <path d="M308.500 413.500h100v89h-100z" />
          <path d="M300.500 512.500h116M308.500 512.500h100v88h-100z" />
        </g>
      </svg>
    </main>
  );
}

export default function App() {
  return (
    <div className="h-screen overflow-hidden bg-white font-['Noto_Sans',sans-serif] text-[11px]">
      <Defs />
      <div className="-ml-2 flex h-full flex-col">
        <Header />
        <Ribbon />
        <div className="h-7 shrink-0 border-t border-white bg-[#e1e2e3]" />
        <div className="flex min-h-0 flex-1 bg-[#f0f0f0]">
          <aside className="mr-1 flex w-[306px] shrink-0 flex-col border-r border-white pt-px">
            <Properties />
            <ProjectBrowser />
          </aside>
          <Canvas />
        </div>
      </div>
    </div>
  );
}
